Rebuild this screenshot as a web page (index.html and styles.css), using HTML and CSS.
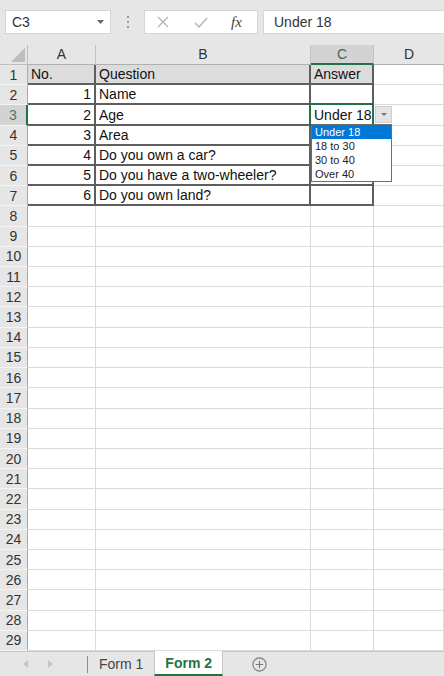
FILE: index.html
```html
<!DOCTYPE html>
<html>
<head>
<meta charset="utf-8">
<link rel="stylesheet" href="styles.css">
</head>
<body>
<div class="app">
  <div class="toolbar">
    <div class="namebox">
      <span>C3</span>
      <svg class="nb-arrow" width="7" height="4" viewBox="0 0 7 4"><polygon points="0,0 7,0 3.5,4" fill="#666"/></svg>
    </div>
    <div class="dots"><i></i><i></i><i></i></div>
    <div class="fxbox">
      <svg class="ic-x" width="12" height="12" viewBox="0 0 12 12"><path d="M1 1 L11 11 M11 1 L1 11" stroke="#b3b3b3" stroke-width="1.3" fill="none"/></svg>
      <svg class="ic-check" width="14" height="11" viewBox="0 0 14 11"><path d="M1 6 L5 10 L13 1" stroke="#b3b3b3" stroke-width="1.4" fill="none"/></svg>
      <span class="fx">fx</span>
    </div>
    <div class="formula">Under 18</div>
  </div>

  <div class="sheet">
    <div class="corner"><svg width="14" height="14" viewBox="0 0 14 14"><polygon points="14,0 14,14 0,14" fill="#bcbcbc"/></svg></div>
    <div class="ch">A</div>
    <div class="ch">B</div>
    <div class="ch ch-sel">C</div>
    <div class="ch ch-last">D</div>

    <div class="rh">1</div>
    <div class="cell t ta hd">No.</div>
    <div class="cell t tb hd">Question</div>
    <div class="cell t tc hd">Answer</div>
    <div class="cell"></div>

    <div class="rh">2</div>
    <div class="cell t ta num">1</div>
    <div class="cell t tb">Name</div>
    <div class="cell t tc"></div>
    <div class="cell"></div>

    <div class="rh rh-sel">3</div>
    <div class="cell t ta num">2</div>
    <div class="cell t tb">Age</div>
    <div class="cell t tc sel">Under 18
      <div class="selbox"></div>
      <div class="ddbtn"><svg width="6" height="3" viewBox="0 0 6 3"><polygon points="0,0 6,0 3,3" fill="#777"/></svg></div>
      <div class="ddlist">
        <div class="dditem active">Under 18</div>
        <div class="dditem">18 to 30</div>
        <div class="dditem">30 to 40</div>
        <div class="dditem">Over 40</div>
      </div>
    </div>
    <div class="cell"></div>

    <div class="rh">4</div>
    <div class="cell t ta num">3</div>
    <div class="cell t tb">Area</div>
    <div class="cell t tc"></div>
    <div class="cell"></div>

    <div class="rh">5</div>
    <div class="cell t ta num">4</div>
    <div class="cell t tb">Do you own a car?</div>
    <div class="cell t tc"></div>
    <div class="cell"></div>

    <div class="rh">6</div>
    <div class="cell t ta num">5</div>
    <div class="cell t tb">Do you have a two-wheeler?</div>
    <div class="cell t tc"></div>
    <div class="cell"></div>

    <div class="rh">7</div>
    <div class="cell t ta num">6</div>
    <div class="cell t tb">Do you own land?</div>
    <div class="cell t tc"></div>
    <div class="cell"></div>

    <div class="rh">8</div><div class="cell"></div><div class="cell"></div><div class="cell"></div><div class="cell"></div>
    <div class="rh">9</div><div class="cell"></div><div class="cell"></div><div class="cell"></div><div class="cell"></div>
    <div class="rh">10</div><div class="cell"></div><div class="cell"></div><div class="cell"></div><div class="cell"></div>
    <div class="rh">11</div><div class="cell"></div><div class="cell"></div><div class="cell"></div><div class="cell"></div>
    <div class="rh">12</div><div class="cell"></div><div class="cell"></div><div class="cell"></div><div class="cell"></div>
    <div class="rh">13</div><div class="cell"></div><div class="cell"></div><div class="cell"></div><div class="cell"></div>
    <div class="rh">14</div><div class="cell"></div><div class="cell"></div><div class="cell"></div><div class="cell"></div>
    <div class="rh">15</div><div class="cell"></div><div class="cell"></div><div class="cell"></div><div class="cell"></div>
    <div class="rh">16</div><div class="cell"></div><div class="cell"></div><div class="cell"></div><div class="cell"></div>
    <div class="rh">17</div><div class="cell"></div><div class="cell"></div><div class="cell"></div><div class="cell"></div>
    <div class="rh">18</div><div class="cell"></div><div class="cell"></div><div class="cell"></div><div class="cell"></div>
    <div class="rh">19</div><div class="cell"></div><div class="cell"></div><div class="cell"></div><div class="cell"></div>
    <div class="rh">20</div><div class="cell"></div><div class="cell"></div><div class="cell"></div><div class="cell"></div>
    <div class="rh">21</div><div class="cell"></div><div class="cell"></div><div class="cell"></div><div class="cell"></div>
    <div class="rh">22</div><div class="cell"></div><div class="cell"></div><div class="cell"></div><div class="cell"></div>
    <div class="rh">23</div><div class="cell"></div><div class="cell"></div><div class="cell"></div><div class="cell"></div>
    <div class="rh">24</div><div class="cell"></div><div class="cell"></div><div class="cell"></div><div class="cell"></div>
    <div class="rh">25</div><div class="cell"></div><div class="cell"></div><div class="cell"></div><div class="cell"></div>
    <div class="rh">26</div><div class="cell"></div><div class="cell"></div><div class="cell"></div><div class="cell"></div>
    <div class="rh">27</div><div class="cell"></div><div class="cell"></div><div class="cell"></div><div class="cell"></div>
    <div class="rh">28</div><div class="cell"></div><div class="cell"></div><div class="cell"></div><div class="cell"></div>
    <div class="rh">29</div><div class="cell"></div><div class="cell"></div><div class="cell"></div><div class="cell"></div>
  </div>

  <div class="tabbar">
    <div class="navs">
      <svg width="5" height="8" viewBox="0 0 5 8"><polygon points="5,0 5,8 0,4" fill="#c4c4c4"/></svg>
      <svg width="5" height="8" viewBox="0 0 5 8"><polygon points="0,0 0,8 5,4" fill="#c4c4c4"/></svg>
    </div>
    <div class="vsep"></div>
    <div class="tab">Form 1</div>
    <div class="tab tab-active">Form 2</div>
    <div class="addtab"><svg width="15" height="15" viewBox="0 0 15 15"><circle cx="7.5" cy="7.5" r="6.6" stroke="#7a7a7a" stroke-width="1.1" fill="none"/><path d="M7.5 3.8 V11.2 M3.8 7.5 H11.2" stroke="#7a7a7a" stroke-width="1.1"/></svg></div>
  </div>
</div>
</body>
</html>
```

FILE: styles.css
```css
* { box-sizing: border-box; }
html, body { margin: 0; padding: 0; }
body {
  width: 444px;
  height: 676px;
  overflow: hidden;
  background: #fff;
  font-family: "Liberation Sans", Arial, sans-serif;
  font-size: 14px;
  color: #222;
}
.app { display: flex; flex-direction: column; height: 676px; }

/* toolbar */
.toolbar {
  height: 45px;
  flex: none;
  background: #e6e6e6;
  display: flex;
  align-items: flex-start;
  padding-top: 10px;
}
.namebox {
  margin-left: 5px;
  width: 106px;
  height: 24px;
  background: #fff;
  border: 1px solid #d6d6d6;
  display: flex;
  align-items: center;
  justify-content: space-between;
  padding: 0 6px 0 6px;
  color: #333;
}
.nb-arrow { display: block; }
.dots {
  width: 33px;
  height: 24px;
  display: flex;
  flex-direction: column;
  align-items: center;
  justify-content: center;
  gap: 3px;
}
.dots i { display: block; width: 2px; height: 2px; background: #9a9a9a; }
.fxbox {
  width: 114px;
  height: 24px;
  background: #fff;
  border: 1px solid #d6d6d6;
  display: flex;
  align-items: center;
  padding-left: 12px;
}
.ic-x { margin-right: 25px; }
.ic-check { margin-right: 23px; }
.fx {
  font-family: "Liberation Serif", "Times New Roman", serif;
  font-style: italic;
  font-size: 15px;
  color: #444;
}
.formula {
  margin-left: 5px;
  flex: 1;
  height: 24px;
  background: #fff;
  border: 1px solid #d6d6d6;
  border-right: none;
  padding-left: 10px;
  line-height: 22px;
  color: #333;
}

/* sheet */
.sheet {
  height: 606px;
  flex: none;
  display: grid;
  grid-template-columns: 28px 68px 215px 63px 1fr;
  grid-template-rows: 20px repeat(29, 1fr);
  background: #fff;
}
.corner {
  background: #e6e6e6;
  border-right: 1px solid #bdbdbd;
  border-bottom: 1px solid #bdbdbd;
  display: flex;
  align-items: flex-end;
  justify-content: flex-end;
  padding: 0 2px 2px 0;
}
.corner svg { display: block; }
.ch {
  background: #e6e6e6;
  border-right: 1px solid #c4c4c4;
  border-bottom: 1px solid #b0b0b0;
  text-align: center;
  line-height: 19px;
  color: #333;
}
.ch-sel {
  background: #d3d3d3;
  color: #3d6b50;
  border-bottom: 2px solid #217346;
  line-height: 18px;
}
.ch-last { border-right: none; }
.rh {
  background: #e6e6e6;
  border-right: 1px solid #ababab;
  border-bottom: 1px solid #f4f4f4;
  display: flex;
  align-items: center;
  justify-content: center;
  color: #333;
}
.rh-sel {
  background: #d3d3d3;
  color: #4d7c62;
  border-right: 2px solid #217346;
}
.cell {
  border-right: 1px solid #dadada;
  border-bottom: 1px solid #dadada;
  display: flex;
  align-items: center;
  padding: 0 3px;
  white-space: nowrap;
  color: #111;
}
.cell.t { border-bottom: 2px solid #5e5e5e; }
.cell.ta, .cell.tb, .cell.tc { border-right: 2px solid #5e5e5e; }
.cell.hd { background: #dcdcdc; }
.cell.num { justify-content: flex-end; }

/* selection & dropdown */
.sel { position: relative; overflow: visible; }
.selbox {
  position: absolute;
  left: -2px;
  top: -2px;
  right: -2px;
  bottom: -2px;
  border: 2px solid #217346;
  pointer-events: none;
}
.ddbtn {
  position: absolute;
  left: 64px;
  top: 1px;
  width: 17px;
  height: 17px;
  background: #e4e4e4;
  border: 1px solid #cfcfcf;
  display: flex;
  align-items: center;
  justify-content: center;
  z-index: 3;
}
.ddbtn svg { display: block; }
.ddlist {
  position: absolute;
  left: 0;
  top: 19px;
  width: 81px;
  background: #fff;
  border: 1px solid #6d6d6d;
  z-index: 4;
  padding: 0;
}
.dditem {
  height: 14px;
  line-height: 14px;
  font-size: 11px;
  padding-left: 3px;
  color: #222;
}
.dditem.active { background: #0078d7; color: #fff; }

/* tab bar */
.tabbar {
  height: 25px;
  flex: none;
  background: #e6e6e6;
  border-top: 1px solid #c6c6c6;
  display: flex;
  align-items: stretch;
}
.navs {
  width: 87px;
  display: flex;
  align-items: center;
  padding-left: 23px;
  gap: 20px;
}
.navs svg { display: block; }
.vsep {
  width: 1px;
  background: #8c8c8c;
  margin: 4px 0 3px;
}
.tab {
  padding: 0 11px 0 11px;
  display: flex;
  align-items: center;
  color: #444;
  margin-top: -1px;
}
.tab-active {
  background: #fff;
  color: #217346;
  font-weight: bold;
  border-left: 1px solid #c6c6c6;
  border-right: 1px solid #c6c6c6;
  border-bottom: 2px solid #217346;
  padding: 0 10px;
}
.addtab {
  margin-left: 29px;
  display: flex;
  align-items: center;
}
.addtab svg { display: block; }
```
